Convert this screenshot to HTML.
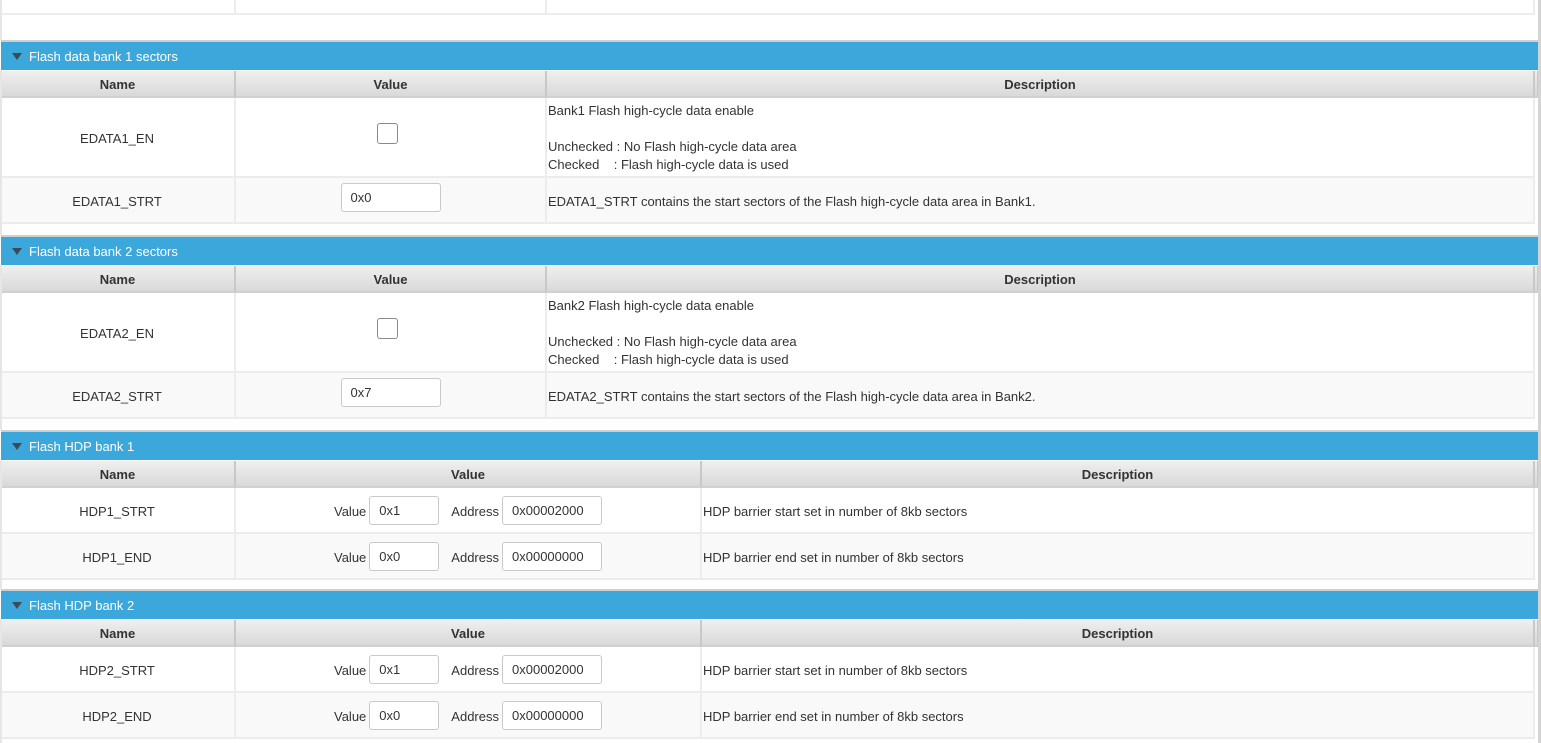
<!DOCTYPE html>
<html><head><meta charset="utf-8"><style>
*{box-sizing:border-box;margin:0;padding:0}
body{width:1541px;height:743px;background:#fff;position:relative;overflow:hidden;font-family:"Liberation Sans",sans-serif;font-size:13px;color:#333}
.a{position:absolute}
.bar{position:absolute;left:1px;width:1539px;height:30px;background:#3ca7db;color:#fff;font-size:13px;line-height:29px;padding-left:28px;border-top:2px solid #cfcfcf}
.bar:before{content:"";position:absolute;left:11px;top:11px;border-left:5px solid transparent;border-right:5px solid transparent;border-top:7px solid #3c4b55}
.hdr{position:absolute;height:27px;background:linear-gradient(#efefef,#d9d9d9);border-right:2px solid #c8c8c8;border-bottom:2px solid #d0d0d0;font-weight:bold;text-align:center;line-height:28px;color:#333}
.cell{position:absolute;border-right:2px solid #ececec;border-bottom:2px solid #ececec;display:flex;align-items:center;justify-content:center;padding-top:3px}
.w{background:#fff}.g{background:#f9f9f9}
.desc{justify-content:flex-start;padding-left:1px}
.inp{display:inline-block;height:29px;border:1px solid #c9c9c9;border-radius:3px;background:#fff;line-height:27px;padding-left:9px;text-align:left}
.cb{width:21px;height:21px;border:1px solid #8a8a8a;border-radius:3px;background:#fff}
.edge{position:absolute;left:1538px;top:0;width:3px;height:743px;background:#d4d4d4}
.lft{position:absolute;left:0;width:2px;background:#e6e6e6}
</style></head><body>

<div class="cell w" style="left:0;top:0;width:236px;height:15px"></div>
<div class="cell w" style="left:236px;top:0;width:311px;height:15px"><div class="a" style="left:104px;top:-10px;width:100px;height:10px;border:1px solid #ccc;border-radius:3px"></div></div>
<div class="cell w" style="left:547px;top:0;width:988px;height:15px"></div>
<div class="lft" style="top:0;height:40px"></div>

<!-- Section 1 -->
<div class="bar" style="top:40px">Flash data bank 1 sectors</div>
<div class="hdr" style="left:1px;top:71px;width:235px">Name</div>
<div class="hdr" style="left:236px;top:71px;width:311px">Value</div>
<div class="hdr" style="left:547px;top:71px;width:988px">Description</div>
<div class="hdr" style="left:1535px;top:71px;width:4px"></div>
<div class="cell w" style="left:0;top:98px;width:236px;height:80px">EDATA1_EN</div>
<div class="cell w" style="left:236px;top:98px;width:311px;height:80px"><div class="cb" style="margin-top:-10px;margin-left:-6px"></div></div>
<div class="cell w desc" style="left:547px;top:98px;width:988px;height:80px;align-items:flex-start;padding-top:4px;line-height:18px">Bank1 Flash high-cycle data enable<br><br>Unchecked : No Flash high-cycle data area<br>Checked &nbsp;&nbsp;&nbsp;: Flash high-cycle data is used</div>
<div class="cell g" style="left:0;top:178px;width:236px;height:46px">EDATA1_STRT</div>
<div class="cell g" style="left:236px;top:178px;width:311px;height:46px;align-items:flex-start;padding-top:5px"><span class="inp" style="width:100px">0x0</span></div>
<div class="cell g desc" style="left:547px;top:178px;width:988px;height:46px">EDATA1_STRT contains the start sectors of the Flash high-cycle data area in Bank1.</div>
<div class="lft" style="top:70px;height:165px"></div>

<!-- Section 2 -->
<div class="bar" style="top:235px">Flash data bank 2 sectors</div>
<div class="hdr" style="left:1px;top:266px;width:235px">Name</div>
<div class="hdr" style="left:236px;top:266px;width:311px">Value</div>
<div class="hdr" style="left:547px;top:266px;width:988px">Description</div>
<div class="hdr" style="left:1535px;top:266px;width:4px"></div>
<div class="cell w" style="left:0;top:293px;width:236px;height:80px">EDATA2_EN</div>
<div class="cell w" style="left:236px;top:293px;width:311px;height:80px"><div class="cb" style="margin-top:-10px;margin-left:-6px"></div></div>
<div class="cell w desc" style="left:547px;top:293px;width:988px;height:80px;align-items:flex-start;padding-top:4px;line-height:18px">Bank2 Flash high-cycle data enable<br><br>Unchecked : No Flash high-cycle data area<br>Checked &nbsp;&nbsp;&nbsp;: Flash high-cycle data is used</div>
<div class="cell g" style="left:0;top:373px;width:236px;height:46px">EDATA2_STRT</div>
<div class="cell g" style="left:236px;top:373px;width:311px;height:46px;align-items:flex-start;padding-top:5px"><span class="inp" style="width:100px">0x7</span></div>
<div class="cell g desc" style="left:547px;top:373px;width:988px;height:46px">EDATA2_STRT contains the start sectors of the Flash high-cycle data area in Bank2.</div>
<div class="lft" style="top:265px;height:165px"></div>

<!-- Section 3 -->
<div class="bar" style="top:430px">Flash HDP bank 1</div>
<div class="hdr" style="left:1px;top:461px;width:235px">Name</div>
<div class="hdr" style="left:236px;top:461px;width:466px">Value</div>
<div class="hdr" style="left:702px;top:461px;width:833px">Description</div>
<div class="hdr" style="left:1535px;top:461px;width:4px"></div>
<div class="cell w" style="left:0;top:488px;width:236px;height:46px">HDP1_STRT</div>
<div class="cell w" style="left:236px;top:488px;width:466px;height:46px;padding-top:0"><span style="margin-top:3px">Value</span><span class="inp" style="width:70px;margin-left:3px">0x1</span><span style="margin-left:12px;margin-top:3px">Address</span><span class="inp" style="width:100px;margin-left:3px">0x00002000</span></div>
<div class="cell w desc" style="left:702px;top:488px;width:833px;height:46px">HDP barrier start set in number of 8kb sectors</div>
<div class="cell g" style="left:0;top:534px;width:236px;height:46px">HDP1_END</div>
<div class="cell g" style="left:236px;top:534px;width:466px;height:46px;padding-top:0"><span style="margin-top:3px">Value</span><span class="inp" style="width:70px;margin-left:3px">0x0</span><span style="margin-left:12px;margin-top:3px">Address</span><span class="inp" style="width:100px;margin-left:3px">0x00000000</span></div>
<div class="cell g desc" style="left:702px;top:534px;width:833px;height:46px">HDP barrier end set in number of 8kb sectors</div>
<div class="lft" style="top:460px;height:129px"></div>

<!-- Section 4 -->
<div class="bar" style="top:589px">Flash HDP bank 2</div>
<div class="hdr" style="left:1px;top:620px;width:235px">Name</div>
<div class="hdr" style="left:236px;top:620px;width:466px">Value</div>
<div class="hdr" style="left:702px;top:620px;width:833px">Description</div>
<div class="hdr" style="left:1535px;top:620px;width:4px"></div>
<div class="cell w" style="left:0;top:647px;width:236px;height:46px">HDP2_STRT</div>
<div class="cell w" style="left:236px;top:647px;width:466px;height:46px;padding-top:0"><span style="margin-top:3px">Value</span><span class="inp" style="width:70px;margin-left:3px">0x1</span><span style="margin-left:12px;margin-top:3px">Address</span><span class="inp" style="width:100px;margin-left:3px">0x00002000</span></div>
<div class="cell w desc" style="left:702px;top:647px;width:833px;height:46px">HDP barrier start set in number of 8kb sectors</div>
<div class="cell g" style="left:0;top:693px;width:236px;height:46px">HDP2_END</div>
<div class="cell g" style="left:236px;top:693px;width:466px;height:46px;padding-top:0"><span style="margin-top:3px">Value</span><span class="inp" style="width:70px;margin-left:3px">0x0</span><span style="margin-left:12px;margin-top:3px">Address</span><span class="inp" style="width:100px;margin-left:3px">0x00000000</span></div>
<div class="cell g desc" style="left:702px;top:693px;width:833px;height:46px">HDP barrier end set in number of 8kb sectors</div>
<div class="lft" style="top:619px;height:124px"></div>

<div class="edge"></div>
</body></html>
